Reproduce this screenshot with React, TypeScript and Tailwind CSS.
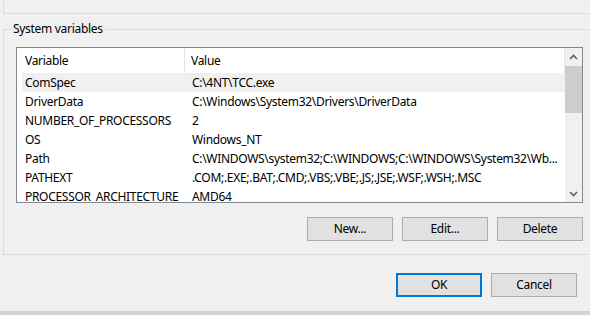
const rows: [string, string][] = [
  ["ComSpec", "C:\\4NT\\TCC.exe"],
  ["DriverData", "C:\\Windows\\System32\\Drivers\\DriverData"],
  ["NUMBER_OF_PROCESSORS", "2"],
  ["OS", "Windows_NT"],
  ["Path", "C:\\WINDOWS\\system32;C:\\WINDOWS;C:\\WINDOWS\\System32\\Wb..."],
  ["PATHEXT", ".COM;.EXE;.BAT;.CMD;.VBS;.VBE;.JS;.JSE;.WSF;.WSH;.MSC"],
  ["PROCESSOR_ARCHITECTURE", "AMD64"],
];

function Chevron({ down }: { down?: boolean }) {
  return (
    <svg width="9" height="6" viewBox="0 0 9 6" className={down ? "rotate-180" : ""}>
      <path d="M1 5 L4.5 1.5 L8 5" fill="none" stroke="#606060" strokeWidth="1.6" />
    </svg>
  );
}

function Button({ label, primary }: { label: string; primary?: boolean }) {
  return (
    <button
      className={
        "w-[86px] h-[24px] bg-[#e1e1e1] text-[12px] text-black flex items-center justify-center " +
        (primary ? "border-2 border-[#0078d7]" : "border border-[#adadad]")
      }
    >
      {label}
    </button>
  );
}

export default function App() {
  return (
    <div
      className="w-[590px] h-[315px] bg-[#f0f0f0] overflow-hidden flex flex-col text-black tracking-[-0.3px]"
      style={{ fontFamily: '"Segoe UI", "Noto Sans", sans-serif' }}
    >
      <div className="h-[14px] ml-[3px] border-l border-b border-[#dcdcdc] shrink-0" />

      <div className="relative mt-[15px] ml-[3px] h-[226px] border-l border-t border-b border-[#dcdcdc] shrink-0 flex flex-col pl-[12px] pr-[7px] pt-[17px]">
        <div className="absolute left-[7px] top-[-9px] px-[2px] bg-[#f0f0f0] text-[12px] leading-[16px]">
          System variables
        </div>

        <div className="h-[156px] border border-[#828790] bg-white flex">
          <div className="flex-1 flex flex-col overflow-hidden">
            <div className="h-[25px] shrink-0 flex text-[12px] pl-[5px]">
              <div className="w-[163px] flex items-center pl-[3px] border-r border-[#e5e5e5]">Variable</div>
              <div className="flex-1 flex items-center pl-[6px] border-r border-[#e5e5e5]">Value</div>
            </div>
            {rows.map(([name, value], i) => (
              <div
                key={name}
                className={
                  "h-[19px] shrink-0 flex items-center text-[12px] ml-[5px] " +
                  (i === 0 ? "bg-[#f0f0f0]" : "")
                }
              >
                <div className="w-[164px] pl-[3px] whitespace-nowrap">{name}</div>
                <div className="w-[366px] pl-[6px] whitespace-nowrap">{value}</div>
              </div>
            ))}
          </div>
          <div className="w-[17px] bg-[#f0f0f0] flex flex-col shrink-0">
            <div className="h-[18px] flex items-center justify-center">
              <Chevron />
            </div>
            <div className="h-[47px] bg-[#cdcdcd]" />
            <div className="flex-1" />
            <div className="h-[17px] flex items-center justify-center">
              <Chevron down />
            </div>
          </div>
        </div>

        <div className="mt-[14px] flex justify-end gap-[9px]">
          <Button label="New..." />
          <Button label="Edit..." />
          <Button label="Delete" />
        </div>
      </div>

      <div className="mt-[18px] flex justify-end gap-[9px] pr-[13px]">
        <Button label="OK" primary />
        <Button label="Cancel" />
      </div>

      <div className="mt-auto h-[4px] bg-[#d4d4d4] shrink-0" />
    </div>
  );
}
